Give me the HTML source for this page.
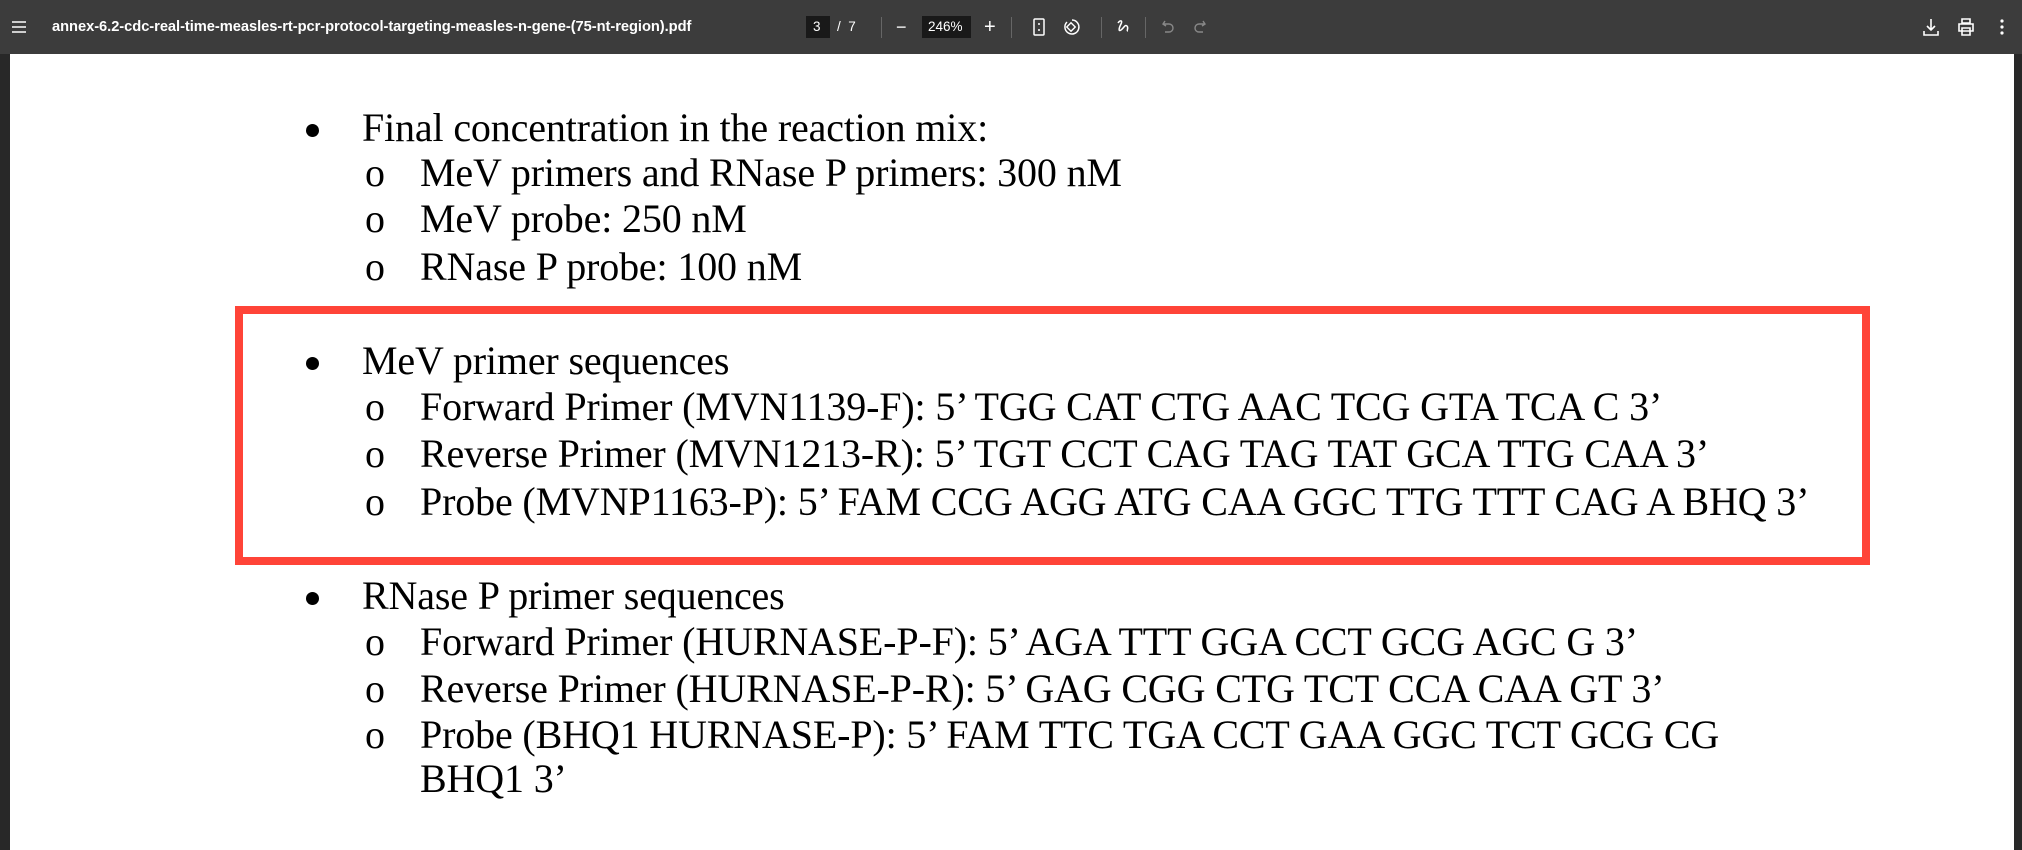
<!DOCTYPE html>
<html><head><meta charset="utf-8"><style>
body{margin:0;width:2022px;height:850px;overflow:hidden;background:#282828;position:relative;font-family:"Liberation Serif",serif}
#tb{position:absolute;left:0;top:0;width:2022px;height:54px;background:#3c3c3c;color:#fff;font-family:"Liberation Sans",sans-serif}
#tb .t{position:absolute;top:0;line-height:54px;font-size:13.5px}
#page{position:absolute;left:10px;top:54px;width:2004px;height:796px;background:#fff}
.l{position:absolute;font-size:40px;line-height:46px;white-space:nowrap;color:#000;letter-spacing:-0.15px}
.b{position:absolute;left:306px;width:13px;height:13px;border-radius:50%;background:#000}
.sep{position:absolute;top:17px;width:1px;height:21px;background:#666}
#box{position:absolute;left:235px;top:306px;width:1619px;height:243px;border:8px solid #ff4438}
svg{position:absolute}
</style></head><body>
<div id="tb">
<svg style="left:11px;top:19px" width="16" height="16" viewBox="0 0 16 16"><path d="M1 3h14M1 8h14M1 13h14" stroke="#fff" stroke-width="1.6"/></svg>
<div class="t" style="left:52px;font-weight:bold;font-size:14.7px;letter-spacing:-0.05px">annex-6.2-cdc-real-time-measles-rt-pcr-protocol-targeting-measles-n-gene-(75-nt-region).pdf</div>
<div style="position:absolute;left:806px;top:16px;width:24px;height:22px;background:#191919"></div>
<div class="t" style="left:813px">3</div>
<div class="t" style="left:837px">/&nbsp;&nbsp;7</div>
<div class="sep" style="left:881px"></div>
<div class="t" style="left:896px;font-size:18px">−</div>
<div style="position:absolute;left:922px;top:16px;width:49px;height:22px;background:#191919"></div>
<div class="t" style="left:928px">246%</div>
<div class="t" style="left:984px;font-size:20px">+</div>
<div class="sep" style="left:1011px"></div>
<svg style="left:1032px;top:18px" width="14" height="18" viewBox="0 0 14 18"><rect x="2" y="1" width="10" height="16" rx="1" fill="none" stroke="#fff" stroke-width="1.5"/><path d="M7 5v2M7 11v2" stroke="#fff" stroke-width="1.5"/></svg>
<svg style="left:1063px;top:17px" width="18" height="20" viewBox="0 0 18 20"><path d="M9 3a7 7 0 1 1-5 2" fill="none" stroke="#fff" stroke-width="1.5"/><rect x="5" y="7" width="6" height="6" transform="rotate(45 8 10)" fill="none" stroke="#fff" stroke-width="1.4"/></svg>
<div class="sep" style="left:1101px"></div>
<svg style="left:1116px;top:17px" width="16" height="20" viewBox="0 0 16 20"><path d="M2 6c2-3 5-3 3 1s-3 8 0 6 4-6 6-4-1 5 1 5" fill="none" stroke="#fff" stroke-width="1.5"/></svg>
<div class="sep" style="left:1145px"></div>
<svg style="left:1161px;top:19px" width="14" height="16" viewBox="0 0 14 16"><path d="M4 2L2 5l3 2M2 5h6a4 4 0 0 1 0 8H4" fill="none" stroke="#888" stroke-width="1.4"/></svg>
<svg style="left:1193px;top:19px" width="14" height="16" viewBox="0 0 14 16"><path d="M10 2l2 3-3 2M12 5H6a4 4 0 0 0 0 8h4" fill="none" stroke="#888" stroke-width="1.4"/></svg>
<svg style="left:1922px;top:17px" width="18" height="20" viewBox="0 0 18 20"><path d="M9 2v11M5 9l4 4 4-4M2 14v4h14v-4" fill="none" stroke="#fff" stroke-width="1.6"/></svg>
<svg style="left:1957px;top:18px" width="18" height="18" viewBox="0 0 18 18"><path d="M5 1h8v4H5zM2 6h14v7H2zM5 10h8v7H5z" fill="none" stroke="#fff" stroke-width="1.6"/></svg>
<svg style="left:1999px;top:18px" width="6" height="18" viewBox="0 0 6 18"><circle cx="3" cy="3" r="1.6" fill="#fff"/><circle cx="3" cy="9" r="1.6" fill="#fff"/><circle cx="3" cy="15" r="1.6" fill="#fff"/></svg>
</div>
<div id="page"></div>
<div id="box"></div>
<div class="b" style="top:124px"></div><div class="l" style="left:362px;top:105px">Final concentration in the reaction mix:</div>
<div class="l" style="left:365px;top:150px">o</div><div class="l" style="left:420px;top:150px">MeV primers and RNase P primers: 300 nM</div>
<div class="l" style="left:365px;top:196px">o</div><div class="l" style="left:420px;top:196px">MeV probe: 250 nM</div>
<div class="l" style="left:365px;top:244px">o</div><div class="l" style="left:420px;top:244px">RNase P probe: 100 nM</div>
<div class="b" style="top:357px"></div><div class="l" style="left:362px;top:338px">MeV primer sequences</div>
<div class="l" style="left:365px;top:384px">o</div><div class="l" style="left:420px;top:384px">Forward Primer (MVN1139-F): 5’ TGG CAT CTG AAC TCG GTA TCA C 3’</div>
<div class="l" style="left:365px;top:431px">o</div><div class="l" style="left:420px;top:431px">Reverse Primer (MVN1213-R): 5’ TGT CCT CAG TAG TAT GCA TTG CAA 3’</div>
<div class="l" style="left:365px;top:479px">o</div><div class="l" style="left:420px;top:479px">Probe (MVNP1163-P): 5’ FAM CCG AGG ATG CAA GGC TTG TTT CAG A BHQ 3’</div>
<div class="b" style="top:592px"></div><div class="l" style="left:362px;top:573px">RNase P primer sequences</div>
<div class="l" style="left:365px;top:619px">o</div><div class="l" style="left:420px;top:619px">Forward Primer (HURNASE-P-F): 5’ AGA TTT GGA CCT GCG AGC G 3’</div>
<div class="l" style="left:365px;top:666px">o</div><div class="l" style="left:420px;top:666px">Reverse Primer (HURNASE-P-R): 5’ GAG CGG CTG TCT CCA CAA GT 3’</div>
<div class="l" style="left:365px;top:712px">o</div><div class="l" style="left:420px;top:712px">Probe (BHQ1 HURNASE-P): 5’ FAM TTC TGA CCT GAA GGC TCT GCG CG</div>
<div class="l" style="left:420px;top:756px">BHQ1 3’</div>
</body></html>
